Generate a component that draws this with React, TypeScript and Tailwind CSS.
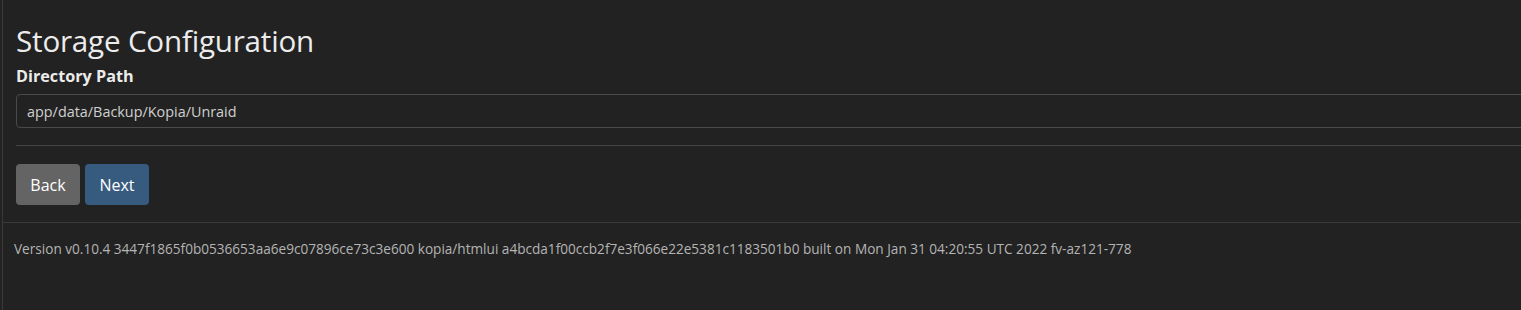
import React, { useState } from 'react';

export default function App() {
  const [path, setPath] = useState('app/data/Backup/Kopia/Unraid');

  return (
    <div className="w-[1521px] h-[310px] overflow-hidden bg-[#222222] font-['Open_Sans',sans-serif]">
      <div className="ml-[2px] h-full border-l border-[#3a3a3a] w-[1600px]">
        <div className="pl-[13px] pt-[23px]">
          <h2 className="text-[29.6px] leading-[36px] text-[#ececec] font-normal tracking-[-0.2px]">
            Storage Configuration
          </h2>
          <label className="block mt-[7px] text-[16.2px] leading-[20px] font-bold text-[#ececec]">
            Directory Path
          </label>
          <input
            value={path}
            onChange={(e) => setPath(e.target.value)}
            className="block mt-[8px] w-full h-[34px] px-[10px] rounded-[4px] border border-[#4a4a4a] bg-[#222222] text-[14.4px] text-[#d0d0d0] outline-none"
          />
          <hr className="mt-[17px] border-0 border-t border-[#444444]" />
          <div className="flex gap-[5px] mt-[18px]">
            <button className="w-[64px] h-[41px] rounded-[4px] bg-[#646464] text-white text-[16px]">Back</button>
            <button className="w-[64px] h-[41px] rounded-[4px] bg-[#375a7f] text-white text-[16px]">Next</button>
          </div>
        </div>
        <div className="mt-[17px] border-t border-[#3a3a3a] pl-[11px] pt-[17px]">
          <p className="text-[13.6px] leading-[18px] text-[#b4b4b4]">
            Version v0.10.4 3447f1865f0b0536653aa6e9c07896ce73c3e600 kopia/htmlui a4bcda1f00ccb2f7e3f066e22e5381c1183501b0 built on Mon Jan 31 04:20:55 UTC 2022 fv-az121-778
          </p>
        </div>
      </div>
    </div>
  );
}
